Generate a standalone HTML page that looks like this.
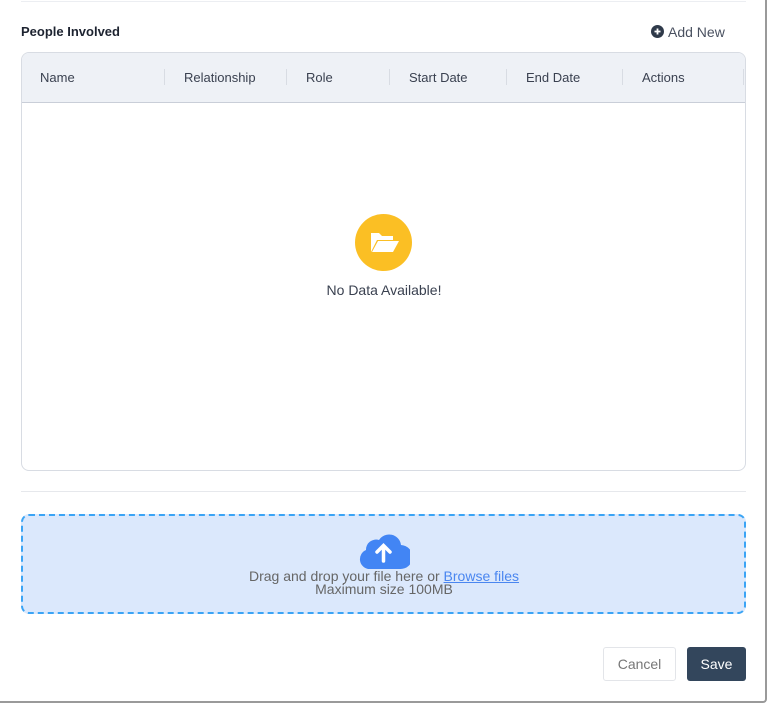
<!DOCTYPE html>
<html><head><style>
body{margin:0;width:768px;height:705px;background:#fff;font-family:"Liberation Sans",sans-serif;position:relative;overflow:hidden}
.modal{position:absolute;left:0;top:0;width:765px;height:701px;border-right:2px solid #9a9a9a;border-bottom:2px solid #9a9a9a;border-radius:0 0 4px 0}
.abs{position:absolute}
.th{position:absolute;top:70px;font-size:13px;color:#3a4150}
.sep{position:absolute;top:69px;width:1px;height:16px;background:#d8dce3}
</style></head><body>
<div class="modal"></div>
<div class="abs" style="left:21px;top:1px;width:725px;height:1px;background:#eceef2"></div>
<div class="abs" style="left:21px;top:24px;font-size:13px;font-weight:bold;color:#1d2330">People Involved</div>
<svg class="abs" style="left:651px;top:25px" width="13" height="13" viewBox="0 0 13 13"><circle cx="6.5" cy="6.5" r="6.5" fill="#2f3a4a"/><path d="M6.5 3.5v6M3.5 6.5h6" stroke="#fff" stroke-width="1.8"/></svg>
<div class="abs" style="left:668px;top:24px;font-size:14px;color:#4a5160">Add New</div>
<div class="abs" style="left:21px;top:52px;width:723px;height:417px;border:1px solid #d8dce3;border-radius:8px;overflow:hidden">
<div style="height:49px;background:#eef1f6;border-bottom:1px solid #c9ced8"></div></div>
<div class="th" style="left:40px">Name</div><div class="sep" style="left:164px"></div>
<div class="th" style="left:184px">Relationship</div><div class="sep" style="left:286px"></div>
<div class="th" style="left:306px">Role</div><div class="sep" style="left:389px"></div>
<div class="th" style="left:409px">Start Date</div><div class="sep" style="left:506px"></div>
<div class="th" style="left:526px">End Date</div><div class="sep" style="left:622px"></div>
<div class="th" style="left:642px">Actions</div><div class="sep" style="left:743px"></div>
<div class="abs" style="left:355px;top:214px;width:57px;height:57px;border-radius:50%;background:#fbbf24"></div>
<svg class="abs" style="left:369px;top:230px" width="31" height="24" viewBox="0 0 31 24"><path d="M2 22V3h8l3 3h11v4H8L2 22z" fill="#fff"/><path d="M3 22l6-11h21l-6 11z" fill="#fff"/></svg>
<div class="abs" style="left:0;width:768px;top:282px;text-align:center;font-size:14px;color:#3a4150">No Data Available!</div>
<div class="abs" style="left:21px;top:491px;width:725px;height:1px;background:#e6e8ec"></div>
<div class="abs" style="left:21px;top:514px;width:721px;height:96px;border:2px dashed #3ba4f5;border-radius:8px;background:#dbe8fc"></div>
<svg class="abs" style="left:357px;top:532px" width="53" height="38" viewBox="0 0 53 38"><path d="M11 37a10 10 0 0 1-2-19 10 10 0 0 1 13-10 12 12 0 0 1 22 5 11 11 0 0 1-1 24z" fill="#4285f4"/><path d="M26.5 29V14M20 20l6.5-6.5L33 20" stroke="#fff" stroke-width="3.5" fill="none" stroke-linecap="round"/></svg>
<div class="abs" style="left:0;width:768px;top:570px;text-align:center;font-size:14px;line-height:13px;color:#666">Drag and drop your file here or <span style="color:#4a86f0;text-decoration:underline">Browse files</span><br>Maximum size 100MB</div>
<div class="abs" style="left:603px;top:647px;width:71px;height:32px;border:1px solid #e3e5e9;border-radius:3px;text-align:center;line-height:32px;font-size:14px;color:#777">Cancel</div>
<div class="abs" style="left:687px;top:647px;width:59px;height:34px;background:#33465c;border-radius:3px;text-align:center;line-height:34px;font-size:14px;color:#fff">Save</div>
</body></html>
